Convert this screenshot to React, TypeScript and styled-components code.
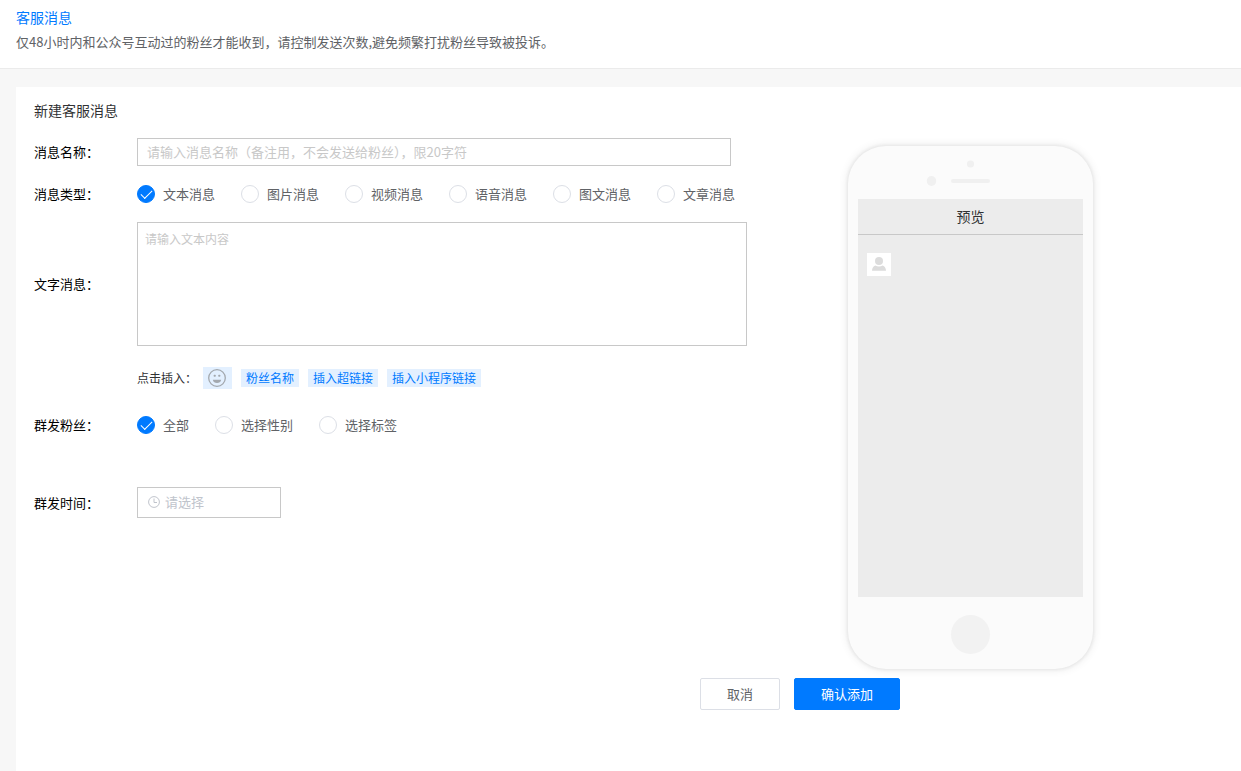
import React, { useState } from "react";
import styled, { createGlobalStyle } from "styled-components";

const GlobalStyle = createGlobalStyle`
  * {
    box-sizing: border-box;
  }
  body {
    margin: 0;
    background: #f7f7f7;
    color: #000;
    font-family: "Noto Sans CJK SC", sans-serif;
    font-size: 13px;
    line-height: 20px;
  }
  h1, h2, p {
    margin: 0;
    font-weight: 400;
  }
  button, input, textarea {
    font-family: inherit;
    margin: 0;
  }
`;

const Page = styled.div`
  display: flex;
  flex-direction: column;
  min-height: 100vh;
`;

const PageHeader = styled.header`
  padding: 7px 16px 16px;
  background: #fff;
  border-bottom: 1px solid #ebebeb;
`;

const PageTitle = styled.h1`
  font-size: 14px;
  line-height: 20px;
  color: #007aff;
`;

const PageNote = styled.p`
  margin-top: 5px;
  color: #606266;
`;

const Panel = styled.main`
  flex: 1;
  margin: 18px 0 0 16px;
  padding: 13px 18px 60px;
  background: #fff;
`;

const PanelTitle = styled.h2`
  font-size: 14px;
  line-height: 20px;
  color: #303133;
`;

const Columns = styled.div`
  display: flex;
  align-items: flex-start;
  gap: 100px;
  margin-top: 18px;
`;

const Fields = styled.div`
  flex: 0 1 714px;
`;

const Row = styled.div<{ $gap?: number }>`
  display: flex;
  align-items: center;
  margin-top: ${(p) => p.$gap ?? 0}px;
`;

const rowName = `
  flex: none;
  width: 103px;
`;

const FieldLabel = styled.label`
  ${rowName}
`;

const GroupName = styled.span`
  ${rowName}
`;

const NameInput = styled.input`
  flex: 0 1 594px;
  min-width: 0;
  height: 28px;
  padding: 0 9px 2px;
  border: 1px solid #c8c8c8;
  font-size: 13px;
  outline: none;
  &::placeholder {
    color: #c8c8c8;
  }
`;

const MessageArea = styled.textarea`
  flex: 0 1 610px;
  min-width: 0;
  height: 124px;
  padding: 6px 7px;
  border: 1px solid #c8c8c8;
  font-size: 12px;
  line-height: 20px;
  resize: none;
  outline: none;
  &::placeholder {
    color: #c8c8c8;
  }
`;

const Options = styled.div`
  display: flex;
  gap: 26px;
`;

const Option = styled.label`
  display: flex;
  align-items: center;
  gap: 8px;
  color: #606266;
  white-space: nowrap;
  cursor: pointer;
`;

const Radio = styled.input`
  appearance: none;
  display: grid;
  place-items: center;
  width: 18px;
  height: 18px;
  border: 1px solid #dcdfe6;
  border-radius: 50%;
  background: #fff;

  &:checked {
    border-color: #007aff;
    background: #007aff;
  }
  &:checked::after {
    content: "";
    width: 10px;
    height: 5px;
    margin-bottom: 3px;
    border: solid #fff;
    border-width: 0 0 1px 1px;
    transform: rotate(-45deg);
  }
`;

const InsertBar = styled.div`
  display: flex;
  align-items: center;
  gap: 9px;
  margin: 21px 0 0 103px;
  font-size: 12px;
  color: #303133;
`;

const InsertHint = styled.span`
  width: 57px;
  white-space: nowrap;
`;

const Tag = styled.button`
  height: 18px;
  padding: 0 5px;
  border: 0;
  background: #e3f0ff;
  color: #007aff;
  font-size: 12px;
  line-height: 18px;
  white-space: nowrap;
  cursor: pointer;
`;

const EmojiButton = styled(Tag)`
  display: flex;
  align-items: center;
  width: 29px;
  height: 22px;
`;

const TimeBox = styled.div`
  display: flex;
  align-items: center;
  gap: 5px;
  width: 144px;
  height: 31px;
  padding: 0 10px 2px;
  border: 1px solid #c8c8c8;
`;

const TimeInput = styled.input`
  flex: 1;
  min-width: 0;
  padding: 0;
  border: 0;
  font-size: 13px;
  outline: none;
  &::placeholder {
    color: #c0c4cc;
  }
`;

const Phone = styled.aside`
  flex: none;
  display: flex;
  flex-direction: column;
  align-items: center;
  width: 245px;
  height: 523px;
  margin-top: 8px;
  border-radius: 38px;
  background: #fbfbfb;
  box-shadow: 0 0 3px 1px #e6e6e6, 0 0 8px 2px #f0f0f0;
`;

const PhoneScreen = styled.div`
  width: 225px;
  height: 398px;
  background: #ececec;
`;

const ScreenTitle = styled.div`
  height: 36px;
  border-bottom: 1px solid #c8c8c8;
  font-size: 14px;
  line-height: 35px;
  text-align: center;
  color: #303133;
`;

const Avatar = styled.div`
  display: grid;
  place-items: center;
  width: 24px;
  height: 23px;
  margin: 18px 0 0 9px;
  padding-bottom: 2px;
  background: #fff;
`;

const HomeButton = styled.div`
  width: 39px;
  height: 39px;
  margin-top: 18px;
  border-radius: 50%;
  background: #f2f2f2;
`;

const Actions = styled.div`
  display: flex;
  gap: 14px;
  margin: 9px 0 0 666px;
`;

const ActionButton = styled.button<{ $primary?: boolean }>`
  height: 32px;
  padding: 0 26px 2px;
  border: 1px solid ${(p) => (p.$primary ? "#007aff" : "#dcdfe6")};
  border-radius: 2px;
  background: ${(p) => (p.$primary ? "#007aff" : "#fff")};
  color: ${(p) => (p.$primary ? "#fff" : "#606266")};
  font-size: 13px;
  white-space: nowrap;
  cursor: pointer;
`;

const SmileIcon = () => (
  <svg width="18" height="18" viewBox="0 0 18 18" fill="none" aria-hidden="true">
    <circle cx="9" cy="9" r="8.3" stroke="#a3a8ae" strokeWidth="1.3" />
    <rect x="5.6" y="5.800" width="2.200" height="2" rx=".8" fill="#a3a8ae" />
    <rect x="10.200" y="5.800" width="2.200" height="2" rx=".8" fill="#a3a8ae" />
    <path d="M4.800 10.700h8.400c-.4 2.200-2 3.300-4.200 3.300s-3.800-1.100-4.200-3.300z" fill="#a3a8ae" />
  </svg>
);

const ClockIcon = () => (
  <svg width="12" height="12" viewBox="0 0 12 12" fill="none" stroke="#c0c4cc" aria-hidden="true">
    <circle cx="6" cy="6" r="5.400" />
    <path d="M6 2.500v4h3" />
  </svg>
);

const PersonIcon = () => (
  <svg width="14" height="14" viewBox="0 0 14 14" fill="#dcdcdc" aria-hidden="true">
    <circle cx="7" cy="4" r="4" />
    <path d="M0 13.800c0-2.800 1.300-4.700 3.300-5.400 2 1.400 5.400 1.400 7.400 0 2 .7 3.300 2.600 3.300 5.400z" />
  </svg>
);

const PhoneTop = () => (
  <svg width="245" height="53" viewBox="0 0 245 53" fill="#f0f0f0" aria-hidden="true">
    <circle cx="122.500" cy="18" r="3.600" />
    <ellipse cx="83.500" cy="35" rx="4.700" ry="5" />
    <rect x="103" y="33" width="39" height="4" rx="2" />
  </svg>
);

const messageTypes = ["文本消息", "图片消息", "视频消息", "语音消息", "图文消息", "文章消息"];
const audiences = ["全部", "选择性别", "选择标签"];
const insertions = ["粉丝名称", "插入超链接", "插入小程序链接"];

type RadioRowProps = { id: string; title: string; options: string[]; gap: number };

function RadioRow({ id, title, options, gap }: RadioRowProps) {
  const [value, setValue] = useState(options[0]);
  return (
    <Row $gap={gap} role="radiogroup" aria-labelledby={id}>
      <GroupName id={id}>{title}</GroupName>
      <Options>
        {options.map((option) => (
          <Option key={option}>
            <Radio
              type="radio"
              name={`${id}-option`}
              checked={value === option}
              onChange={() => setValue(option)}
            />
            {option}
          </Option>
        ))}
      </Options>
    </Row>
  );
}

export default function App() {
  return (
    <Page>
      <GlobalStyle />
      <PageHeader>
        <PageTitle>客服消息</PageTitle>
        <PageNote>仅48小时内和公众号互动过的粉丝才能收到，请控制发送次数,避免频繁打扰粉丝导致被投诉。</PageNote>
      </PageHeader>
      <Panel>
        <PanelTitle>新建客服消息</PanelTitle>
        <Columns>
          <Fields>
            <Row>
              <FieldLabel htmlFor="name">消息名称：</FieldLabel>
              <NameInput id="name" placeholder="请输入消息名称（备注用，不会发送给粉丝），限20字符" />
            </Row>
            <RadioRow id="type" title="消息类型：" options={messageTypes} gap={18} />
            <Row $gap={18}>
              <FieldLabel htmlFor="content">文字消息：</FieldLabel>
              <MessageArea id="content" placeholder="请输入文本内容" />
            </Row>
            <InsertBar>
              <InsertHint>点击插入：</InsertHint>
              <EmojiButton type="button" aria-label="表情">
                <SmileIcon />
              </EmojiButton>
              {insertions.map((text) => (
                <Tag key={text} type="button">
                  {text}
                </Tag>
              ))}
            </InsertBar>
            <RadioRow id="audience" title="群发粉丝：" options={audiences} gap={26} />
            <Row $gap={52}>
              <FieldLabel htmlFor="time">群发时间：</FieldLabel>
              <TimeBox>
                <ClockIcon />
                <TimeInput id="time" placeholder="请选择" />
              </TimeBox>
            </Row>
          </Fields>
          <Phone>
            <PhoneTop />
            <PhoneScreen>
              <ScreenTitle>预览</ScreenTitle>
              <Avatar>
                <PersonIcon />
              </Avatar>
            </PhoneScreen>
            <HomeButton />
          </Phone>
        </Columns>
        <Actions>
          <ActionButton type="button">取消</ActionButton>
          <ActionButton type="button" $primary>
            确认添加
          </ActionButton>
        </Actions>
      </Panel>
    </Page>
  );
}
